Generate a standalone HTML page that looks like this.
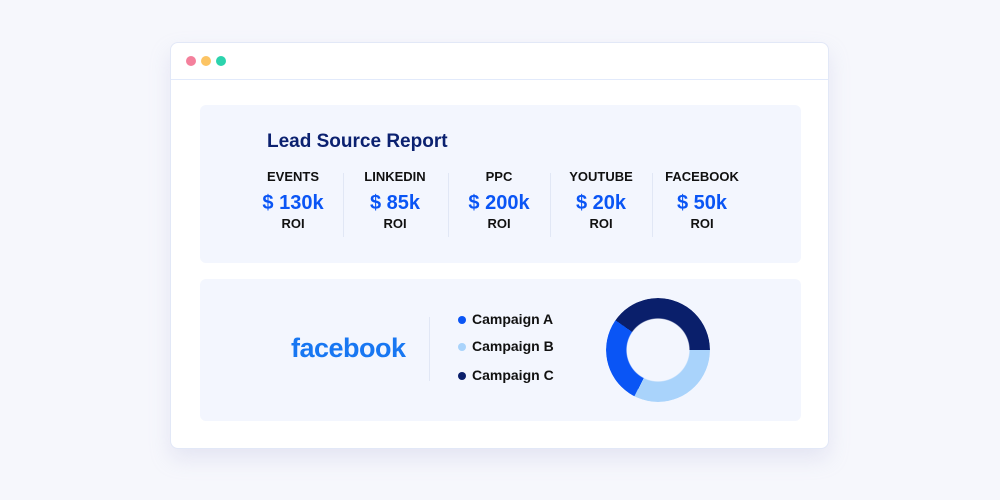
<!DOCTYPE html>
<html><head><style>
*{margin:0;padding:0;box-sizing:border-box}
body{width:1000px;height:500px;background:#f6f7fc;font-family:"Liberation Sans",sans-serif;position:relative;overflow:hidden}
.win{position:absolute;left:170px;top:42px;width:659px;height:407px;background:#fff;border:1px solid #e2e8f7;border-radius:8px;box-shadow:0 10px 20px rgba(180,180,220,.25)}
.bar{position:absolute;left:0;top:36px;width:100%;height:1px;background:#e2eafb}
.dot{position:absolute;top:13px;width:10px;height:10px;border-radius:50%}
.p{position:absolute;left:29px;width:601px;background:#f3f6fe;border-radius:6px}
.t{position:absolute;left:67px;top:26px;font-size:19px;font-weight:bold;color:#0b2170}
.col{position:absolute;top:64px;width:100px;text-align:center;margin-left:-50px}
.l{font-size:13px;font-weight:bold;color:#111;height:23px}
.v{font-size:20px;font-weight:bold;color:#0a55f5;height:21px}
.r{font-size:13px;font-weight:bold;color:#111;margin-top:3px}
.dv{position:absolute;top:68px;width:1px;height:64px;background:#e1e7f5}
.lg{position:absolute;left:272px;font-size:14px;font-weight:bold;color:#111}
.lg i{position:absolute;left:-14px;top:5px;width:8px;height:8px;border-radius:50%}
.donut{position:absolute;left:406px;top:19px;width:104px;height:104px;border-radius:50%;
background:conic-gradient(#0a1f6b 0 90deg,#a9d3fb 90deg 207deg,#0a55f5 207deg 305deg,#0a1f6b 305deg);
-webkit-mask:radial-gradient(circle,transparent 31px,#000 32px);mask:radial-gradient(circle,transparent 31px,#000 32px)}
</style></head><body>
<div class="win">
<div class="dot" style="left:15px;background:#f4809c"></div>
<div class="dot" style="left:30px;background:#fcc464"></div>
<div class="dot" style="left:45px;background:#2cd3ad"></div>
<div class="bar"></div>
<div class="p" style="top:62px;height:158px">
<div class="t">Lead Source Report</div>
<div class="col" style="left:93px"><div class="l">EVENTS</div><div class="v">$ 130k</div><div class="r">ROI</div></div>
<div class="dv" style="left:143px"></div>
<div class="col" style="left:195px"><div class="l">LINKEDIN</div><div class="v">$ 85k</div><div class="r">ROI</div></div>
<div class="dv" style="left:248px"></div>
<div class="col" style="left:299px"><div class="l">PPC</div><div class="v">$ 200k</div><div class="r">ROI</div></div>
<div class="dv" style="left:350px"></div>
<div class="col" style="left:401px"><div class="l">YOUTUBE</div><div class="v">$ 20k</div><div class="r">ROI</div></div>
<div class="dv" style="left:452px"></div>
<div class="col" style="left:502px"><div class="l">FACEBOOK</div><div class="v">$ 50k</div><div class="r">ROI</div></div>
</div>
<div class="p" style="top:236px;height:142px">
<div style="position:absolute;left:91px;top:54px;font-size:27px;font-weight:bold;color:#1877f2;letter-spacing:-0.5px">facebook</div>
<div style="position:absolute;left:229px;top:38px;width:1px;height:64px;background:#e1e7f5"></div>
<div class="lg" style="top:32px"><i style="background:#0a55f5"></i>Campaign A</div>
<div class="lg" style="top:59px"><i style="background:#a9d3fb"></i>Campaign B</div>
<div class="lg" style="top:88px"><i style="background:#0a1f6b"></i>Campaign C</div>
<div class="donut"></div>
</div>
</div>
</body></html>
